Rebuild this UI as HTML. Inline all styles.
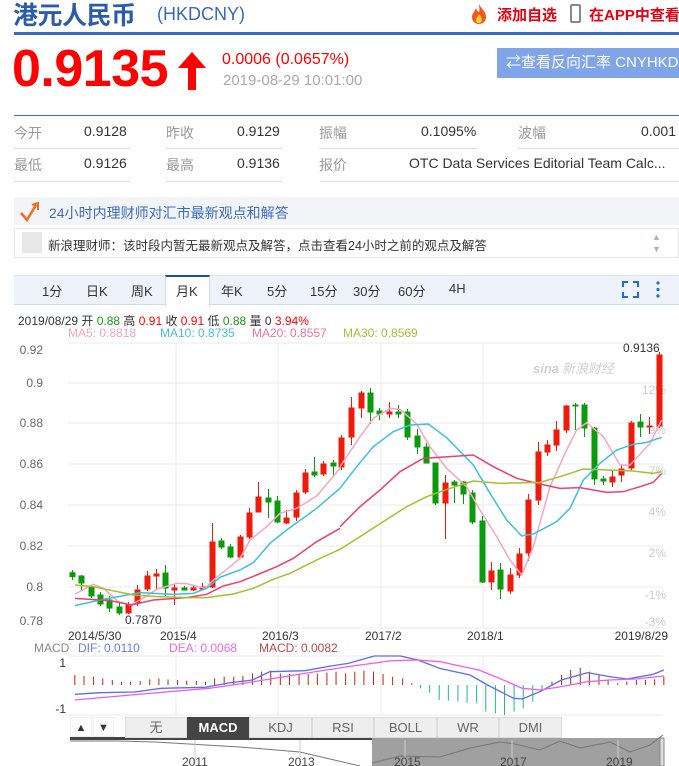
<!DOCTYPE html>
<html><head><meta charset="utf-8"><style>
*{margin:0;padding:0;box-sizing:border-box}
body{width:679px;height:766px;overflow:hidden;background:#fff;font-family:"Liberation Sans","Noto Sans CJK SC",sans-serif;position:relative;color:#333}
.a{position:absolute;white-space:nowrap}
.g{color:#999}
</style></head><body>
<div class="a" style="left:13px;top:-4px;font-size:25px;font-weight:bold;color:#2a5caa;letter-spacing:-0.5px">港元人民币</div>
<div class="a" style="left:157px;top:4px;font-size:18px;color:#3a68b8">(HKDCNY)</div>
<svg class="a" style="left:469px;top:3px" width="20" height="22" viewBox="0 0 20 22"><path d="M10 1C12 6 17 8 17 14C17 19 13 21 10 21C6 21 3 18 3 14C3 10 6 9 7 5C8 8 9 9 10 9C11 7 10 4 10 1Z" fill="#f4551c"/><path d="M10 11C12 13 13 15 13 17C13 19 11 20 10 20C8 20 7 19 7 17C7 15 9 14 10 11Z" fill="#ffd23c"/></svg>
<div class="a" style="left:497px;top:4px;font-size:15px;font-weight:bold;color:#e60012">添加自选</div>
<div class="a" style="left:570px;top:4px;width:11px;height:19px;border:2px solid #888;border-radius:2px"></div>
<div class="a" style="left:589px;top:4px;font-size:15px;font-weight:bold;color:#e60012">在APP中查看</div>
<div class="a" style="left:14px;top:32px;width:665px;height:3px;background:#3a6bc4"></div>

<div class="a" style="left:12px;top:39px;font-size:52px;font-weight:bold;color:#f00;letter-spacing:-0.5px">0.9135</div>
<svg class="a" style="left:177px;top:51px" width="30" height="40" viewBox="0 0 30 40"><path d="M15 1L29 17H19V39H11V17H1Z" fill="#f00"/></svg>
<div class="a" style="left:222px;top:51px;font-size:16px;color:#f00">0.0006 (0.0657%)</div>
<div class="a" style="left:223px;top:72px;font-size:15px;color:#aaa">2019-08-29 10:01:00</div>
<div class="a" style="left:497px;top:48px;width:182px;height:30px;background:#7fa4e8;color:#fff;font-size:15px;line-height:30px;padding-left:9px">⇄查看反向汇率 CNYHKD</div>

<div class="a" style="left:14px;top:115px;width:665px;height:1px;background:#3a6bc4"></div>
<div class="a g" style="left:14px;top:123px;font-size:14px">今开</div>
<div class="a" style="left:84px;top:123px;font-size:14px">0.9128</div>
<div class="a g" style="left:166px;top:123px;font-size:14px">昨收</div>
<div class="a" style="left:237px;top:123px;font-size:14px">0.9129</div>
<div class="a g" style="left:319px;top:123px;font-size:14px">振幅</div>
<div class="a" style="left:421px;top:123px;font-size:14px">0.1095%</div>
<div class="a g" style="left:518px;top:123px;font-size:14px">波幅</div>
<div class="a" style="right:3px;top:123px;font-size:14px">0.001</div>
<div class="a g" style="left:14px;top:155px;font-size:14px">最低</div>
<div class="a" style="left:84px;top:155px;font-size:14px">0.9126</div>
<div class="a g" style="left:166px;top:155px;font-size:14px">最高</div>
<div class="a" style="left:237px;top:155px;font-size:14px">0.9136</div>
<div class="a g" style="left:319px;top:155px;font-size:14px">报价</div>
<div class="a" style="left:409px;top:155px;font-size:14px;width:270px;overflow:hidden">OTC Data Services Editorial Team Calc...</div>
<div class="a" style="left:14px;top:148px;width:116px;height:1px;background:#ddd"></div>
<div class="a" style="left:166px;top:148px;width:116px;height:1px;background:#ddd"></div>
<div class="a" style="left:319px;top:148px;width:159px;height:1px;background:#ddd"></div>
<div class="a" style="left:518px;top:148px;width:161px;height:1px;background:#ddd"></div>
<div class="a" style="left:14px;top:181px;width:116px;height:1px;background:#ddd"></div>
<div class="a" style="left:166px;top:181px;width:116px;height:1px;background:#ddd"></div>
<div class="a" style="left:320px;top:181px;width:359px;height:1px;background:#ddd"></div>

<div class="a" style="left:14px;top:197px;width:665px;height:28px;background:#f3f4f7"></div>
<svg class="a" style="left:19px;top:201px" width="22" height="22" viewBox="0 0 22 22"><path d="M2 12L8 19L17 4" stroke="#f26b21" stroke-width="2.5" fill="none"/><path d="M13 4L19 2L19 9" stroke="#f26b21" stroke-width="2" fill="none"/></svg>
<div class="a" style="left:49px;top:203px;font-size:14px;color:#3b6cc0">24小时内理财师对汇市最新观点和解答</div>
<div class="a" style="left:14px;top:228px;width:665px;height:30px;border:1px solid #e6e6e6"></div>
<div class="a" style="left:22px;top:232px;width:20px;height:21px;background:#e8e8e8"></div>
<div class="a" style="left:48px;top:235px;font-size:12.5px;color:#333">新浪理财师：该时段内暂无最新观点及解答，点击查看24小时之前的观点及解答</div>
<div class="a" style="left:652px;top:231px;font-size:9px;color:#9bb5d8;line-height:12px">▲<br>▼</div>

<div class="a" style="left:14px;top:275px;width:665px;height:30px;background:#eef3fb;border-top:1px solid #dde5f0;border-bottom:1px solid #cfdcee"></div>
<div class="a" style="left:165px;top:275px;width:45px;height:31px;background:#fff;border-top:2px solid #1d4f9b;border-left:1px solid #cfdcee;border-right:1px solid #cfdcee"></div>
<div class="a" style="top:281px;left:0;font-size:13px;color:#333;width:679px;height:20px">
<span class="a" style="left:42px;top:0">1分</span><span class="a" style="left:86px;top:0">日K</span><span class="a" style="left:131px;top:0">周K</span><span class="a" style="left:176px;top:0">月K</span><span class="a" style="left:221px;top:0">年K</span><span class="a" style="left:267px;top:0">5分</span><span class="a" style="left:310px;top:0">15分</span><span class="a" style="left:353px;top:0">30分</span><span class="a" style="left:398px;top:0">60分</span><span class="a" style="left:449px;top:0">4H</span></div>
<svg class="a" style="left:622px;top:281px" width="40" height="18" viewBox="0 0 40 18"><path d="M1 6V1H6M11 1H16V6M16 11V16H11M6 16H1V11" stroke="#1d6fd1" stroke-width="2" fill="none"/><circle cx="36" cy="2" r="1.6" fill="#1d6fd1"/><circle cx="36" cy="8.5" r="1.6" fill="#1d6fd1"/><circle cx="36" cy="15" r="1.6" fill="#1d6fd1"/></svg>

<div class="a" style="left:18px;top:312px;font-size:12px;color:#333">2019/08/29 开 <span style="color:#1a9a1a">0.88</span> 高 <span style="color:#f00">0.91</span> 收 <span style="color:#f00">0.91</span> 低 <span style="color:#1a9a1a">0.88</span> 量 0 <span style="color:#f00">3.94%</span></div>
<div class="a" style="top:326px;left:0;font-size:12px;width:679px">
<span class="a" style="left:68px;color:#f5a5c0">MA5: 0.8818</span><span class="a" style="left:160px;color:#45c0dc">MA10: 0.8735</span><span class="a" style="left:252px;color:#f0739a">MA20: 0.8557</span><span class="a" style="left:343px;color:#a3c23a">MA30: 0.8569</span></div>

<svg class="a" style="left:0;top:0" width="679" height="766" viewBox="0 0 679 766" font-family="Liberation Sans, sans-serif">
<g stroke="#ebebeb" stroke-width="1">
<path d="M68 343H663M68 383H663M68 423H663M68 464H663M68 505H663M68 546H663M68 587H663M68 628H663M176 343V628M278 343V628M381 343V628M483 343V628M176 656V715M278 656V715M381 656V715M483 656V715M68 656H663M68 715H663"/>
</g>
<g font-size="12" fill="#666" text-anchor="end">
<text x="43" y="354">0.92</text><text x="43" y="387">0.9</text><text x="43" y="427">0.88</text><text x="43" y="468">0.86</text><text x="43" y="509">0.84</text><text x="43" y="550">0.82</text><text x="43" y="591">0.8</text><text x="43" y="625">0.78</text>
</g>
<g font-size="12" fill="#ccc" text-anchor="end">
<text x="666" y="394">12%</text><text x="666" y="434">9%</text><text x="666" y="475">7%</text><text x="666" y="516">4%</text><text x="666" y="557">2%</text><text x="666" y="599">-1%</text><text x="666" y="626">-3%</text>
</g>
<text x="533" y="373" font-size="13" fill="#d0d0d0" font-style="italic" font-weight="bold">sina<tspan font-weight="normal" font-family="Noto Sans CJK SC"> 新浪财经</tspan></text>
<text x="623" y="352" font-size="12" fill="#333">0.9136</text>
<text x="125" y="624" font-size="12" fill="#333">0.7870</text>
<g font-size="12" fill="#333">
<text x="68" y="640">2014/5/30</text><text x="160" y="640">2015/4</text><text x="262" y="640">2016/3</text><text x="365" y="640">2017/2</text><text x="467" y="640">2018/1</text><text x="668" y="640" text-anchor="end">2019/8/29</text>
</g>
<g stroke-width="1">
<g fill="#0a9b0a" stroke="#0a9b0a">
<path d="M72.5 570V580M81.5 575V590M91.5 585V598M100.5 592V606M109.5 596V612M119.5 603V615M165.5 565V596M184.5 586V590M221.5 538V549M230.5 544V558M268.5 489V518M277.5 496V523M314.5 457V477M333.5 460V477M370.5 388V424M379.5 408V420M398.5 405V418M407.5 409V440M417.5 429V454M426.5 443V463M435.5 463V505M454.5 480V503M463.5 481V504M472.5 490V524M482.5 516V583M500.5 563V599M575.5 403V430M584.5 403V437M594.5 427V485M603.5 476V485M640.5 414V437"/>
<rect x="70" y="572.7" width="5" height="4"/><rect x="79" y="576" width="5" height="7"/><rect x="89" y="587" width="5" height="9"/><rect x="98" y="595" width="5" height="9"/><rect x="107" y="600" width="5" height="8"/><rect x="117" y="607" width="5" height="6"/><rect x="163" y="573" width="5" height="15"/><rect x="182" y="588" width="5" height="2"/><rect x="219" y="541" width="5" height="6"/><rect x="228" y="547" width="5" height="10"/><rect x="266" y="498" width="5" height="4"/><rect x="275" y="501" width="5" height="21"/><rect x="312" y="472" width="5" height="3"/><rect x="331" y="463" width="5" height="3"/><rect x="368" y="393" width="5" height="19"/><rect x="377" y="411" width="5" height="3"/><rect x="396" y="412" width="5" height="2"/><rect x="405" y="412" width="5" height="25"/><rect x="415" y="436" width="5" height="11"/><rect x="424" y="447" width="5" height="16"/><rect x="433" y="463" width="5" height="40"/><rect x="452" y="482" width="5" height="3"/><rect x="461" y="482" width="5" height="12"/><rect x="470" y="493" width="5" height="29"/><rect x="480" y="521" width="5" height="61"/><rect x="498" y="570" width="5" height="19"/><rect x="573" y="405" width="5" height="1"/><rect x="582" y="405" width="5" height="23"/><rect x="592" y="428" width="5" height="51"/><rect x="601" y="479" width="5" height="2"/><rect x="638" y="422" width="5" height="5"/>
</g>
<g fill="#f01a0a" stroke="#f01a0a">
<path d="M128.5 602V614M137.5 585V606M147.5 571V591M156.5 569V590M174.5 584V605M193.5 586V591M202.5 583V590M212.5 523V588M240.5 535V558M249.5 508V539M258.5 482V512M286.5 510V524M296.5 490V521M305.5 469V494M323.5 461V476M341.5 435V470M351.5 397V445M361.5 391V418M389.5 402V418M445.5 475V539M491.5 562V590M510.5 568V594M519.5 548V578M528.5 494V561M538.5 442V505M547.5 440V456M556.5 421V451M566.5 405V433M612.5 470V487M621.5 465V482M631.5 421V470M649.5 417V434M659.5 352V428"/>
<rect x="126" y="605" width="5" height="8"/><rect x="135" y="590" width="5" height="13"/><rect x="145" y="576" width="5" height="13"/><rect x="154" y="574" width="5" height="2"/><rect x="172" y="588" width="5" height="2"/><rect x="191" y="588" width="5" height="2"/><rect x="200" y="587" width="5" height="2"/><rect x="210" y="542" width="5" height="45"/><rect x="238" y="537" width="5" height="20"/><rect x="247" y="513" width="5" height="24"/><rect x="256" y="497" width="5" height="15"/><rect x="284" y="518" width="5" height="5"/><rect x="294" y="493" width="5" height="24"/><rect x="303" y="473" width="5" height="19"/><rect x="321" y="464" width="5" height="10"/><rect x="339" y="438" width="5" height="29"/><rect x="349" y="408" width="5" height="29"/><rect x="359" y="393" width="5" height="15"/><rect x="387" y="412" width="5" height="2"/><rect x="443" y="483" width="5" height="20"/><rect x="489" y="571" width="5" height="11"/><rect x="508" y="575" width="5" height="16"/><rect x="517" y="554" width="5" height="21"/><rect x="526" y="500" width="5" height="53"/><rect x="536" y="452" width="5" height="48"/><rect x="545" y="445" width="5" height="7"/><rect x="554" y="430" width="5" height="15"/><rect x="564" y="406" width="5" height="24"/><rect x="610" y="477" width="5" height="5"/><rect x="619" y="469" width="5" height="6"/><rect x="629" y="423" width="5" height="45"/><rect x="647" y="426" width="5" height="1"/><rect x="657" y="355" width="5" height="71"/>
</g>
</g>
<g fill="none" stroke-width="1.5">
<g transform="translate(0,340) scale(0.33333)" stroke-width="4.5">
<polyline stroke="#f6a7c0" points="225,762 280,733 310,745 355,785 390,795 420,780 470,748 530,730 560,731 615,745 640,720 690,680 720,655 750,600 800,560 840,520 890,505 950,468 1020,385"/>
<polyline stroke="#3cc0dc" points="225,797 300,780 420,758 520,763 580,760 620,745 660,712 720,690 760,668 810,610 860,570 950,505 1020,445"/>
<polyline stroke="#ec3f72" points="225,775 330,782 395,795 460,780 560,773 620,763 670,738 720,725 770,705 830,680 880,655 950,605 1020,565"/>
<polyline stroke="#a2c02f" points="225,735 280,740 400,765 470,770 560,773 620,773 700,762 760,745 820,718 870,700 950,660 1020,628"/>
</g>
<g transform="translate(340,340) scale(0.33333)" stroke-width="4.5">
<polyline stroke="#f6a7c0" points="0,380 60,290 100,235 150,205 180,208 230,252 270,320 320,385 380,440 420,510 470,590 510,660 545,705 580,620 630,440 680,330 710,270 740,248 790,290 840,375 870,375 930,310 965,240"/>
<polyline stroke="#3cc0dc" points="0,445 50,380 100,320 160,275 210,255 265,252 320,293 400,375 450,460 500,540 545,588 580,582 650,545 690,505 730,420 780,370 830,330 880,313 920,307 965,292"/>
<polyline stroke="#ec3f72" points="0,560 60,500 120,450 180,395 250,355 330,350 400,345 460,380 530,415 600,432 660,445 720,443 800,457 850,455 900,440 940,427 965,400"/>
<polyline stroke="#a2c02f" points="0,628 60,590 130,545 200,500 260,470 330,445 400,423 480,430 600,427 660,410 730,387 800,390 880,393 940,400 965,395"/>
</g>
</g>
<g font-size="12">
<text x="34" y="652" fill="#888">MACD</text><text x="78" y="652" fill="#6c79f0">DIF: 0.0110</text><text x="169" y="652" fill="#e86be8">DEA: 0.0068</text><text x="259" y="652" fill="#c04848">MACD: 0.0082</text>
<text x="66" y="667" fill="#333" text-anchor="end">1</text><text x="66" y="713" fill="#333" text-anchor="end">-1</text>
</g>
<g transform="translate(0,630) scale(0.4353,0.33333)" stroke-width="2.3" fill="none">
<path stroke="#b8280e" d="M172 165V135M193 165V138M215 165V140M236 165V145M258 165V150M279 165V155M300 165V155M322 165V153M344 165V148M365 165V145M386 165V148M408 165V150M429 165V152M451 165V153M472 165V155M493 165V145M515 165V140M537 165V140M558 165V138M580 165V130M601 165V125M622 165V122M644 165V130M665 165V132M687 165V132M708 165V132M729 165V130M751 165V128M772 165V125M794 165V130M815 165V125M836 165V122M858 165V125M880 165V132M902 165V140M925 165V145M946 165V160M1268 165V155M1290 165V135M1311 165V120M1333 165V113M1354 165V125M1376 165V135M1397 165V150M1419 165V160M1440 165V155M1462 165V150M1483 165V150M1504 165V148M1525 165V140"/>
<path stroke="#23b88a" d="M966 165V175M987 165V188M1009 165V210M1030 165V212M1052 165V215M1073 165V218M1095 165V220M1116 165V245M1138 165V250M1159 165V255M1181 165V245M1202 165V235M1224 165V215M1245 165V180"/>
<polyline stroke="#5a6cf0" stroke-width="1.3" vector-effect="non-scaling-stroke" points="172,193 230,188 310,186 370,175 470,172 530,158 580,150 620,125 700,122 760,108 800,100 860,78 920,78 960,90 1010,115 1080,135 1120,165 1180,205 1200,207 1240,185 1290,150 1350,128 1400,140 1440,147 1500,133 1525,120"/>
<polyline stroke="#ee5cee" stroke-width="1.3" vector-effect="non-scaling-stroke" points="172,210 300,195 480,175 560,160 700,130 800,110 900,92 960,90 1010,95 1100,120 1160,152 1200,175 1240,180 1290,170 1350,155 1400,150 1460,147 1525,138"/>
</g>
<rect x="70" y="737" width="302" height="3" fill="#444"/>
<rect x="372" y="738" width="291" height="28" fill="#a0a0a0"/>
<rect x="660" y="738" width="4" height="28" fill="#ddd" stroke="#888"/>
<path d="M70 741L120 741L155 742L240 747L300 752L360 766M372 763L400 756L440 757L470 748L500 742L515 744L540 750L560 741L580 748L610 742L630 752L650 745L663 735" stroke="#777" fill="none"/>
<g stroke="#ccc"><path d="M195 740V766M300 740V766M405 740V766M512 740V766M618 740V766"/></g>
<g font-size="12" fill="#444"><text x="182" y="766">2011</text><text x="288" y="766">2013</text><text x="394" y="766">2015</text><text x="500" y="766">2017</text><text x="606" y="766">2019</text></g>
</svg>

<div class="a" style="left:70px;top:717px;width:22px;height:20px;font-size:11px;text-align:center;line-height:20px;border:1px solid #eee">▲</div>
<div class="a" style="left:93px;top:717px;width:21px;height:20px;font-size:11px;text-align:center;line-height:20px;border:1px solid #eee">▼</div>
<div class="a" style="left:125px;top:717px;height:21px;display:flex;font-size:13px;line-height:19px;color:#666">
<div style="width:62px;text-align:center;background:#eee;border:1px solid #ddd">无</div>
<div style="width:62px;text-align:center;background:#444;color:#fff;font-weight:bold;border:1px solid #444">MACD</div>
<div style="width:63px;text-align:center;background:#eee;border:1px solid #ddd">KDJ</div>
<div style="width:62px;text-align:center;background:#eee;border:1px solid #ddd">RSI</div>
<div style="width:63px;text-align:center;background:#eee;border:1px solid #ddd">BOLL</div>
<div style="width:62px;text-align:center;background:#eee;border:1px solid #ddd">WR</div>
<div style="width:63px;text-align:center;background:#eee;border:1px solid #ddd">DMI</div>
</div>
</body></html>
